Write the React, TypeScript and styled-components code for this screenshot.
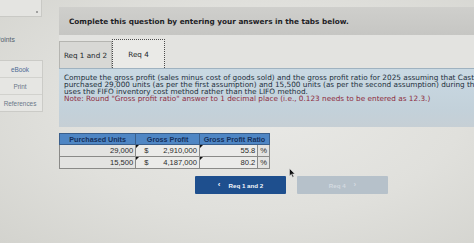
import React from "react";
import styled, { createGlobalStyle } from "styled-components";

const Global = createGlobalStyle`
  html, body { margin: 0; padding: 0; }
  body {
    width: 474px; height: 243px; overflow: hidden;
    background: radial-gradient(ellipse at 55% 45%, #e9e9e6 0%, #e0e0dc 55%, #d3d3ce 100%);
    font-family: "DejaVu Sans", Verdana, sans-serif;
  }
`;

const Page = styled.div`
  display: flex;
  width: 474px;
  height: 243px;
  overflow: hidden;
  position: relative;
`;

const Sidebar = styled.aside`
  width: 59px;
  flex: none;
  display: flex;
  flex-direction: column;
  overflow: hidden;
`;

const TopBox = styled.div`
  margin-left: -4px;
  width: 44px;
  height: 16px;
  border: 1px solid #c9c9c5;
  border-top: none;
  background: #e4e4e1;
  position: relative;
  &::after {
    content: "";
    position: absolute;
    right: 3px;
    bottom: 3px;
    width: 2px;
    height: 2px;
    border-radius: 1px;
    background: #8a8a88;
  }
`;

const Points = styled.div`
  margin: 19px 0 0 -4px;
  font-family: "Liberation Sans", Arial, sans-serif;
  font-size: 6.8px;
  color: #52606e;
`;

const LinkBox = styled.div`
  margin: 17px 0 0 -3px;
  width: 44px;
  border: 1px solid #cbcbc7;
  background: #e6e6e3;
  display: flex;
  flex-direction: column;
`;

const LinkItem = styled.div<{ $first?: boolean }>`
  height: 16px;
  display: flex;
  align-items: center;
  justify-content: center;
  font-family: "Liberation Sans", Arial, sans-serif;
  font-size: 6.4px;
  color: ${(p) => (p.$first ? "#4d6a94" : "#6a7888")};
  border-top: ${(p) => (p.$first ? "none" : "1px solid #d2d2ce")};
`;

const Main = styled.main`
  flex: 1;
  min-width: 0;
  padding-top: 7px;
  display: flex;
  flex-direction: column;
  overflow: hidden;
`;

const HeaderBand = styled.div`
  height: 28px;
  background: linear-gradient(#cfcfcc, #c6c6c3);
  display: flex;
  align-items: center;
  padding-left: 10px;
  font-weight: bold;
  font-size: 7.3px;
  color: #1e2226;
  white-space: nowrap;
`;

const TabRow = styled.div`
  height: 33px;
  background: #e3e3e0;
  display: flex;
  align-items: flex-end;
`;

const Tab = styled.div<{ $active?: boolean }>`
  width: 53px;
  height: ${(p) => (p.$active ? "29px" : "27px")};
  box-sizing: border-box;
  display: flex;
  align-items: center;
  justify-content: center;
  font-size: 7.2px;
  color: #22262a;
  background: ${(p) => (p.$active ? "#eaeae7" : "#d8d8d5")};
  border: ${(p) => (p.$active ? "1px dotted #4a4a4a" : "1px solid #b5b5b1")};
  border-bottom: none;
`;

const Panel = styled.div`
  height: 59px;
  box-sizing: border-box;
  background: linear-gradient(#c9d9e3, #c3d1da 70%, #c6cfd5);
  border-top: 1px solid #9fb2c0;
  padding: 5px 0 0 5px;
  font-size: 7.3px;
  line-height: 7px;
  color: #23303c;
  white-space: nowrap;
`;

const Line = styled.div<{ $note?: boolean }>`
  color: ${(p) => (p.$note ? "#8e2d3e" : "#23303c")};
`;

const Table = styled.table`
  margin-top: 6px;
  border-collapse: collapse;
  font-family: "Liberation Sans", Arial, sans-serif;
  width: 211px;
  border: 1px solid #6a6a6a;
`;

const Th = styled.th<{ $w: number }>`
  width: ${(p) => p.$w}px;
  height: 10px;
  padding: 0;
  background: #4f86c4;
  color: #14305c;
  font-size: 7.2px;
  font-weight: bold;
  text-align: center;
  border: 1px solid #3a5f8c;
`;

const Td = styled.td<{ $thick?: boolean; $mark?: boolean; $bg?: string }>`
  height: 11px;
  padding: 0 2px;
  font-size: 7.6px;
  color: #2b2b2b;
  background: ${(p) => p.$bg ?? "#e7e7e5"};
  border: 1px solid #8a8a88;
  border-left: ${(p) => (p.$thick ? "1.5px solid #222" : "1px solid #8a8a88")};
  position: relative;
  text-align: right;
  &::before {
    content: "";
    display: ${(p) => (p.$mark ? "block" : "none")};
    position: absolute;
    left: 0;
    top: 0;
    width: 0;
    height: 0;
    border-top: 3px solid #111;
    border-right: 3px solid transparent;
  }
`;

const Money = styled.div`
  display: flex;
  justify-content: space-between;
  padding-left: 6px;
`;

const ButtonRow = styled.div`
  margin-top: 7px;
  padding-left: 136px;
  display: flex;
  gap: 11px;
`;

const NavButton = styled.div<{ $disabled?: boolean }>`
  width: 91px;
  height: 18px;
  display: flex;
  align-items: center;
  justify-content: center;
  gap: 8px;
  font-family: "Liberation Sans", Arial, sans-serif;
  font-weight: bold;
  font-size: 6.2px;
  color: ${(p) => (p.$disabled ? "#d3dae0" : "#f2f5fa")};
  background: ${(p) => (p.$disabled ? "#b6c1ca" : "#1e4f8e")};
  border-radius: 1px;
`;

const Chevron = styled.span`
  font-size: 8px;
  line-height: 1;
`;

const Cursor = styled.svg`
  position: absolute;
  left: 289px;
  top: 168px;
`;

export default function App() {
  return (
    <>
      <Global />
      <Page>
        <Sidebar>
          <TopBox />
          <Points>Points</Points>
          <LinkBox>
            <LinkItem $first>eBook</LinkItem>
            <LinkItem>Print</LinkItem>
            <LinkItem>References</LinkItem>
          </LinkBox>
        </Sidebar>
        <Main>
          <HeaderBand>Complete this question by entering your answers in the tabs below.</HeaderBand>
          <TabRow>
            <Tab>Req 1 and 2</Tab>
            <Tab $active>Req 4</Tab>
          </TabRow>
          <Panel>
            <Line>
              Compute the gross profit (sales minus cost of goods sold) and the gross profit ratio for 2025 assuming that Castle Company
            </Line>
            <Line>
              purchased 29,000 units (as per the first assumption) and 15,500 units (as per the second assumption) during the year and
            </Line>
            <Line>uses the FIFO inventory cost method rather than the LIFO method.</Line>
            <Line $note>
              Note: Round "Gross profit ratio" answer to 1 decimal place (i.e., 0.123 needs to be entered as 12.3.)
            </Line>
          </Panel>
          <Table>
            <thead>
              <tr>
                <Th $w={76}>Purchased Units</Th>
                <Th $w={63}>Gross Profit</Th>
                <Th $w={72} colSpan={2}>Gross Profit Ratio</Th>
              </tr>
            </thead>
            <tbody>
              {[
                ["29,000", "2,910,000", "55.8"],
                ["15,500", "4,187,000", "80.2"],
              ].map((r) => (
                <tr key={r[0]}>
                  <Td $bg="#e3e3e1">{r[0]}</Td>
                  <Td $thick $mark $bg="#ebebe9">
                    <Money>
                      <span>$</span>
                      <span>{r[1]}</span>
                    </Money>
                  </Td>
                  <Td $thick $mark $bg="#ebebe9" style={{ width: 54 }}>
                    {r[2]}
                  </Td>
                  <Td $bg="#e3e3e1" style={{ textAlign: "left" }}>%</Td>
                </tr>
              ))}
            </tbody>
          </Table>
          <ButtonRow>
            <NavButton>
              <Chevron>‹</Chevron>
              <span>Req 1 and 2</span>
            </NavButton>
            <NavButton $disabled>
              <span>Req 4</span>
              <Chevron>›</Chevron>
            </NavButton>
          </ButtonRow>
        </Main>
        <Cursor width="7" height="10" viewBox="0 0 7 10">
          <path d="M0.5 0.5 L0.5 8 L2.3 6.3 L3.6 9.3 L4.8 8.8 L3.5 5.9 L6 5.9 Z" fill="#111" stroke="#eee" strokeWidth="0.5" />
        </Cursor>
      </Page>
    </>
  );
}
